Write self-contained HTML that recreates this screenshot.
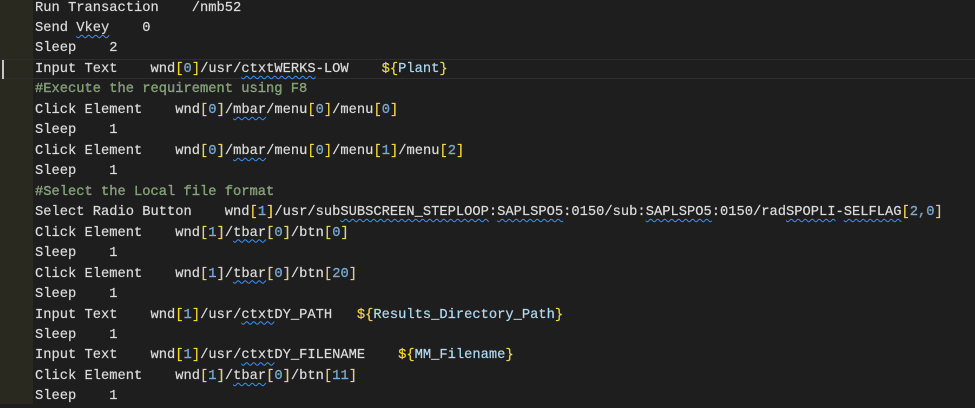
<!DOCTYPE html>
<html><head><meta charset="utf-8"><style>
html,body{margin:0;padding:0;background:#1e1e1e;width:975px;height:404px;overflow:hidden}
.g{position:absolute;left:0;top:0;width:33px;height:404px;background:#29291f}
.cl{position:absolute;left:0;width:975px;top:59px;height:20px;box-sizing:border-box;border-top:1px solid #2e2e2e;border-bottom:1px solid #2e2e2e}
.bar{position:absolute;left:2px;top:60px;width:2px;height:19px;background:#c6c6c6}
pre{position:absolute;left:35px;top:-1.5px;margin:0;font-family:"Liberation Mono",monospace;font-size:13.75px;line-height:20.47px;color:#dcdcdc;-webkit-text-stroke:0.2px #dcdcdc}
.b{color:#ffd700}.n{color:#569cd6}.c{color:#6a9955}.v{color:#9cdcfe}
.w{text-decoration:underline wavy #3794ff;text-decoration-thickness:1px;text-underline-offset:3px}
</style></head><body>
<div class="g"></div><div class="cl"></div><div class="bar"></div>
<pre>Run Transaction    /nmb52
Send <span class="w">Vkey</span>    0
Sleep    2
Input Text    wnd<span class="b">[</span><span class="n">0</span><span class="b">]</span>/usr/<span class="w">ctxtWERKS</span>-LOW    <span class="b">${</span><span class="v">Plant</span><span class="b">}</span>
<span class="c">#Execute the requirement using F8</span>
Click Element    wnd<span class="b">[</span><span class="n">0</span><span class="b">]</span>/<span class="w">mbar</span>/menu<span class="b">[</span><span class="n">0</span><span class="b">]</span>/menu<span class="b">[</span><span class="n">0</span><span class="b">]</span>
Sleep    1
Click Element    wnd<span class="b">[</span><span class="n">0</span><span class="b">]</span>/<span class="w">mbar</span>/menu<span class="b">[</span><span class="n">0</span><span class="b">]</span>/menu<span class="b">[</span><span class="n">1</span><span class="b">]</span>/menu<span class="b">[</span><span class="n">2</span><span class="b">]</span>
Sleep    1
<span class="c">#Select the Local file format</span>
Select Radio Button    wnd<span class="b">[</span><span class="n">1</span><span class="b">]</span>/usr/sub<span class="w">SUBSCREEN_STEPLOOP</span>:<span class="w">SAPLSPO5</span>:0150/sub:<span class="w">SAPLSPO5</span>:0150/rad<span class="w">SPOPLI</span>-<span class="w">SELFLAG</span><span class="b">[</span><span class="n">2,0</span><span class="b">]</span>
Click Element    wnd<span class="b">[</span><span class="n">1</span><span class="b">]</span>/<span class="w">tbar</span><span class="b">[</span><span class="n">0</span><span class="b">]</span>/btn<span class="b">[</span><span class="n">0</span><span class="b">]</span>
Sleep    1
Click Element    wnd<span class="b">[</span><span class="n">1</span><span class="b">]</span>/<span class="w">tbar</span><span class="b">[</span><span class="n">0</span><span class="b">]</span>/btn<span class="b">[</span><span class="n">20</span><span class="b">]</span>
Sleep    1
Input Text    wnd<span class="b">[</span><span class="n">1</span><span class="b">]</span>/usr/<span class="w">ctxt</span>DY_PATH   <span class="b">${</span><span class="v">Results_Directory_Path</span><span class="b">}</span>
Sleep    1
Input Text    wnd<span class="b">[</span><span class="n">1</span><span class="b">]</span>/usr/<span class="w">ctxt</span>DY_FILENAME    <span class="b">${</span><span class="v">MM_Filename</span><span class="b">}</span>
Click Element    wnd<span class="b">[</span><span class="n">1</span><span class="b">]</span>/<span class="w">tbar</span><span class="b">[</span><span class="n">0</span><span class="b">]</span>/btn<span class="b">[</span><span class="n">11</span><span class="b">]</span>
Sleep    1</pre>
</body></html>
